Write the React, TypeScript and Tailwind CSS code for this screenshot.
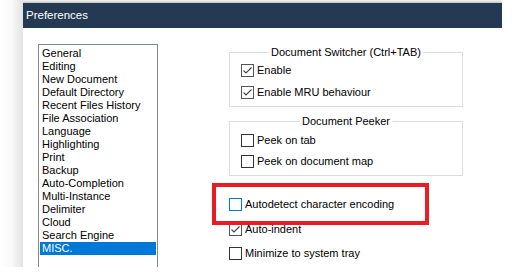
import React from "react";

const items = [
  "General",
  "Editing",
  "New Document",
  "Default Directory",
  "Recent Files History",
  "File Association",
  "Language",
  "Highlighting",
  "Print",
  "Backup",
  "Auto-Completion",
  "Multi-Instance",
  "Delimiter",
  "Cloud",
  "Search Engine",
  "MISC.",
];

function Box({ checked, focus }: { checked?: boolean; focus?: boolean }) {
  return (
    <div
      className={
        "w-[13px] h-[13px] shrink-0 bg-white border " +
        (focus ? "border-[#0078d7]" : checked ? "border-[#555]" : "border-[#333]")
      }
    >
      {checked && (
        <svg width="11" height="11" viewBox="0 0 11 11" className="block">
          <polyline points="1.5,5.5 4,8 9.5,2.5" fill="none" stroke="#444" strokeWidth="1.1" />
        </svg>
      )}
    </div>
  );
}

function Check({ label, checked, focus, className = "" }: { label: string; checked?: boolean; focus?: boolean; className?: string }) {
  return (
    <div className={"flex items-center h-[13px] gap-[3px] " + className}>
      <Box checked={checked} focus={focus} />
      <span className="leading-[13px] whitespace-nowrap">{label}</span>
    </div>
  );
}

function Group({ title, children, className = "" }: { title: string; children: React.ReactNode; className?: string }) {
  return (
    <div className={"relative border border-[#dcdcdc] h-[55px] " + className}>
      <div className="absolute -top-[7px] left-0 right-0 flex justify-center">
        <span className="bg-white px-[2px] leading-[13px] whitespace-nowrap">{title}</span>
      </div>
      {children}
    </div>
  );
}

export default function App() {
  return (
    <div className="w-[522px] h-[278px] bg-white flex overflow-hidden font-['Liberation_Sans',Arial,sans-serif] text-black">
      <div className="w-[23px] h-[267px] bg-gradient-to-r from-white via-[#f9f9f9] to-[#e3e3e3] shrink-0" />
      <div className="w-[479px] h-[267px] flex flex-col shrink-0">
        <div className="h-[3px] bg-gradient-to-b from-[#f4f4f4] to-[#c6c6c6]" />
        <div className="h-[25px] bg-[#243a53] text-white text-[11.5px] pl-[3px] flex items-center">Preferences</div>
        <div className="flex-1 flex overflow-hidden pl-[15px] pt-[16px] relative">
          <div className="w-[120px] h-[240px] border border-[#828790] px-[1px] pt-[2px] text-[11px] shrink-0">
            {items.map((it) => (
              <div
                key={it}
                className={
                  "h-[13px] leading-[13px] pl-[2px] whitespace-nowrap " +
                  (it === "MISC." ? "bg-[#0078d7] text-white" : "")
                }
              >
                {it}
              </div>
            ))}
          </div>
          <div className="ml-[71px] mt-[8px] w-[234px] flex flex-col text-[11px] shrink-0">
            <Group title="Document Switcher (Ctrl+TAB)">
              <div className="pl-[11px] pt-[11px] flex flex-col gap-[9px]">
                <Check label="Enable" checked />
                <Check label="Enable MRU behaviour" checked />
              </div>
            </Group>
            <Group title="Document Peeker" className="mt-[14px]">
              <div className="pl-[11px] pt-[12px] flex flex-col gap-[8px]">
                <Check label="Peek on tab" />
                <Check label="Peek on document map" />
              </div>
            </Group>
            <Check label="Autodetect character encoding" focus className="mt-[22px]" />
            <Check label="Auto-indent" checked className="mt-[12px]" />
            <Check label="Minimize to system tray" className="mt-[11px]" />
          </div>
          <div className="absolute left-[189px] top-[155px] w-[217px] h-[42px] border-[4px] border-[#ec1c24]" />
        </div>
      </div>
    </div>
  );
}
